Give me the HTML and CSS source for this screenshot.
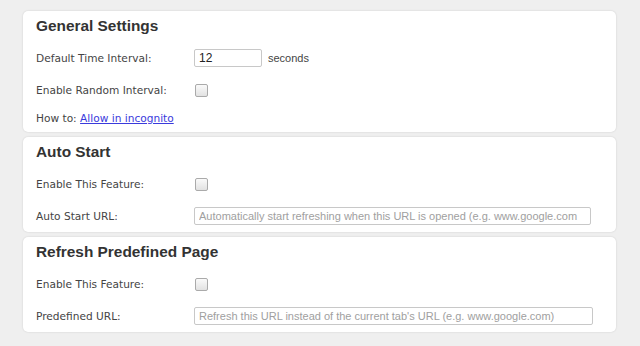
FILE: index.html
```html
<!DOCTYPE html>
<html>
<head>
<meta charset="utf-8">
<link rel="stylesheet" href="styles.css">
</head>
<body>
<div class="page">
  <section class="card card-first">
    <h2 class="title">General Settings</h2>
    <div class="row">
      <label class="label">Default Time Interval:</label>
      <div class="ctrl"><input class="num" type="text" value="12"><span class="unit">seconds</span></div>
    </div>
    <div class="row">
      <label class="label">Enable Random Interval:</label>
      <div class="ctrl"><span class="check"></span></div>
    </div>
    <div class="howto">How to: <a href="#">Allow in incognito</a></div>
  </section>
  <section class="card">
    <h2 class="title">Auto Start</h2>
    <div class="row">
      <label class="label">Enable This Feature:</label>
      <div class="ctrl"><span class="check"></span></div>
    </div>
    <div class="row">
      <label class="label">Auto Start URL:</label>
      <div class="ctrl"><input class="url" type="text" placeholder="Automatically start refreshing when this URL is opened (e.g. www.google.com"></div>
    </div>
  </section>
  <section class="card">
    <h2 class="title">Refresh Predefined Page</h2>
    <div class="row">
      <label class="label">Enable This Feature:</label>
      <div class="ctrl"><span class="check"></span></div>
    </div>
    <div class="row">
      <label class="label">Predefined URL:</label>
      <div class="ctrl"><input class="url url2" type="text" placeholder="Refresh this URL instead of the current tab's URL (e.g. www.google.com)"></div>
    </div>
  </section>
</div>
</body>
</html>
```
FILE: styles.css
```css
html, body { margin: 0; padding: 0; }
body { background: #efefef; width: 640px; height: 346px; overflow: hidden; }
.page { padding: 11px 24px 0 23px; display: flex; flex-direction: column; gap: 5px; }
.card {
  background: #fff;
  border-radius: 5px;
  box-shadow: 0 0 2px rgba(0,0,0,0.15);
  padding: 5px 13px 0 13px;
}
.card-first { padding-bottom: 2px; }
.title {
  margin: 0 0 6px 0;
  font-family: "Liberation Sans", Arial, sans-serif;
  font-weight: bold;
  font-size: 15.4px;
  color: #333;
  height: 20px;
  line-height: 20px;
}
.row { display: flex; align-items: center; height: 32px; }
.label {
  width: 158px;
  font-family: "DejaVu Sans", Verdana, sans-serif;
  font-size: 10.6px;
  color: #444;
}
.ctrl { display: flex; align-items: center; flex: 1; }
.num {
  box-sizing: border-box;
  width: 68px; height: 18px;
  border: 1px solid #c8c8c8; border-radius: 2px;
  font-family: "Liberation Sans", Arial, sans-serif; font-size: 12px; color: #222;
  padding: 0 4px; margin: 0;
}
.unit { margin-left: 6px; font-family: "Liberation Sans", Arial, sans-serif; font-size: 11px; color: #444; }
.check {
  display: inline-block; width: 11px; height: 11px;
  border: 1px solid #aaa; border-radius: 2px;
  background: linear-gradient(#fafafa, #e2e2e2);
  margin-left: 1px;
}
.url {
  box-sizing: border-box; width: 397px; height: 18px;
  border: 1px solid #c8c8c8; border-radius: 2px;
  font-family: "Liberation Sans", Arial, sans-serif; font-size: 11px;
  padding: 0 4px; margin: 0;
}
.url2 { width: 399px; }
.url::placeholder { color: #a0a0a0; }
.howto {
  font-family: "DejaVu Sans", Verdana, sans-serif; font-size: 10.6px; color: #444;
  height: 24px; line-height: 24px;
}
.howto a { color: #3a3adc; }
```
